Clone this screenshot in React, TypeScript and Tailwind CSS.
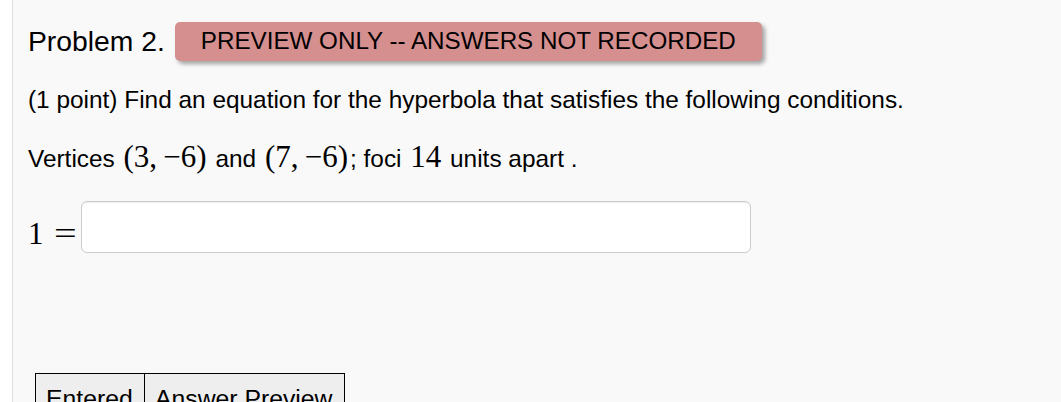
import React from "react";

const sans = "font-['Liberation_Sans',Arial,Helvetica,sans-serif]";
const serif = "font-['Liberation_Serif','Times_New_Roman',serif]";

function M({ children }: { children: React.ReactNode }) {
  return <span className={`${serif} mx-[2px] text-[31px] leading-none`}>{children}</span>;
}

export default function App() {
  return (
    <div className={`flex min-h-[402px] bg-white text-black ${sans}`}>
      <div className="w-[12px] shrink-0 bg-white" />
      <div className="flex-1 border-l border-[#dedede] bg-[#f9f9f9] pl-[15px] pt-[22px]">
        {/* heading */}
        <div className="flex h-[39px] items-center gap-[10px]">
          <h3 className="text-[28.3px] leading-none">Problem 2.</h3>
          <div className="flex h-[39px] items-center rounded-[5px] bg-[#d68f8f] pl-[26px] pr-[26px] text-[24.2px] leading-none shadow-[3px_3px_4px_rgba(0,0,0,0.35)]">
            PREVIEW ONLY -- ANSWERS NOT RECORDED
          </div>
        </div>

        <p className="mt-[24px] h-[30px] text-[24.4px] leading-[30px]">
          (1 point) Find an equation for the hyperbola that satisfies the following conditions.
        </p>

        <p className="mt-[26px] flex h-[33px] items-baseline whitespace-pre text-[24.4px] leading-[30px]">
          Vertices <M>(3,&thinsp;−6)</M> and <M>(7,&thinsp;−6)</M>; foci <M>14</M> units apart .
        </p>

        <div className="mt-[27px] flex items-center">
          <span className={`${serif} mt-[12px] flex w-[53px] text-[31px] leading-none`}>
            <span>1</span>
            <span className="ml-[10px] inline-block scale-x-[1.3] origin-left">=</span>
          </span>
          <input
            type="text"
            className="h-[52px] w-[670px] rounded-[6px] border border-[#cccccc] bg-white px-3 text-[24px] shadow-[inset_0_1px_1px_rgba(0,0,0,0.075)] outline-none"
          />
        </div>

        <table className="ml-[7px] mt-[120px] border-collapse text-[24.75px] leading-[30px]">
          <thead>
            <tr className="bg-[#eeeeee]">
              <th className="w-[109px] border border-black px-[10px] pb-[6px] pt-[10px] text-left font-normal">Entered</th>
              <th className="w-[200px] border border-black px-[10px] pb-[6px] pt-[10px] text-left font-normal">Answer Preview</th>
            </tr>
          </thead>
        </table>
      </div>
    </div>
  );
}
